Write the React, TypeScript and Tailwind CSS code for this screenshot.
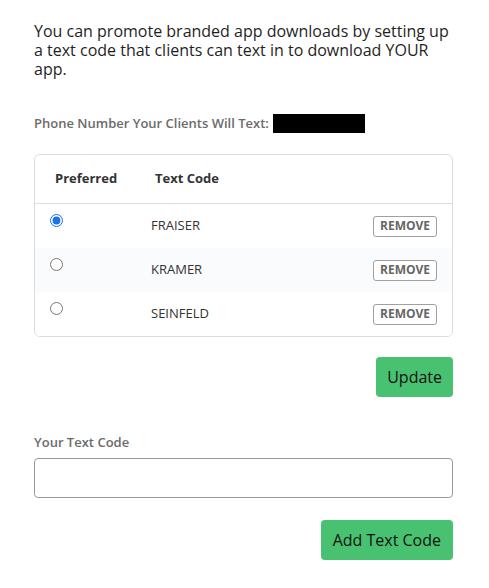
import React from "react";

const codes = ["FRAISER", "KRAMER", "SEINFELD"];

export default function App() {
  return (
    <div
      className="w-[489px] h-[588px] bg-white pl-[34px] pr-[36px] pt-[22px]"
      style={{ fontFamily: '"Open Sans", "Noto Sans", sans-serif' }}
    >
      <p className="text-[16px] leading-[19px] text-[#1f1f1f]">
        You can promote branded app downloads by setting up a text code that clients can text in to download YOUR app.
      </p>

      <div className="mt-[35px] flex items-center h-[19px]">
        <span className="text-[13px] font-semibold text-[#6b6b6b]">Phone Number Your Clients Will Text:</span>
        <span className="ml-[4px] inline-block w-[92px] h-[19px] bg-black"></span>
      </div>

      <div className="mt-[21px] border border-[#d9dde2] rounded-[6px] overflow-hidden">
        <div className="flex items-center h-[49px] border-b border-[#d9dde2] text-[13px] font-bold text-[#333]">
          <div className="w-[120px] pl-[20px]">Preferred</div>
          <div>Text Code</div>
        </div>
        {codes.map((c, i) => (
          <div
            key={c}
            className={`flex h-[44px] ${i === 1 ? "bg-[#fafbfc]" : "bg-white"}`}
          >
            <div className="w-[116px] pl-[15px] pt-[10px]">
              <input
                type="radio"
                name="preferred"
                defaultChecked={i === 0}
                className="m-0 w-[13px] h-[13px] block accent-[#1a73e8]"
              />
            </div>
            <div className="flex-1 flex items-center text-[13px] text-[#333]">{c}</div>
            <div className="flex items-center pr-[15px]">
              <button className="w-[64px] h-[21px] border border-[#a0a0a0] rounded-[3px] bg-white text-[12px] font-bold text-[#666] leading-none">
                REMOVE
              </button>
            </div>
          </div>
        ))}
      </div>

      <div className="mt-[20px] flex justify-end">
        <button className="h-[40px] px-[11px] rounded-[4px] bg-[#48c271] text-[16px] text-[#111]">
          Update
        </button>
      </div>

      <div className="mt-[36px] text-[13px] font-semibold text-[#6b6b6b] leading-[18px]">Your Text Code</div>
      <input
        type="text"
        className="mt-[7px] block w-full h-[40px] border border-[#999] rounded-[4px] px-[10px] outline-none"
      />

      <div className="mt-[22px] flex justify-end">
        <button className="h-[40px] px-[12px] rounded-[4px] bg-[#48c271] text-[16px] text-[#111]">
          Add Text Code
        </button>
      </div>
    </div>
  );
}
